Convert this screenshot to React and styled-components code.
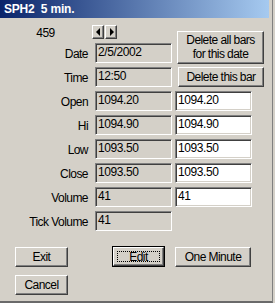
import React from "react";
import styled, { createGlobalStyle, css } from "styled-components";

const Global = createGlobalStyle`
  html, body { margin: 0; padding: 0; background: #d4d0c8; }
  body { font-family: "Liberation Sans", Arial, sans-serif; font-size: 12px; letter-spacing: -0.55px; color: #000; }
`;

const Window = styled.div`
  width: 273px;
  height: 303px;
  box-sizing: border-box;
  padding-right: 3px;
  background: #d4d0c8;
  border-right: 1px solid #808080;
  border-bottom: 2px solid #6a6a6a;
  overflow: hidden;
`;

const TitleBar = styled.div`
  height: 18px;
  display: flex;
  align-items: center;
  padding-left: 4px;
  background: linear-gradient(to right, #0a246a, #a6caf0);
  color: #fff;
  font-weight: bold;
  font-size: 12px;
  letter-spacing: -0.2px;
  white-space: pre;
`;

const Body = styled.div`
  display: grid;
  grid-template-columns: 88px 77px 87px;
  grid-template-rows: 16px repeat(8, 20px) 32px 24px;
  row-gap: 4px;
  padding-top: 5px;
`;

const Counter = styled.div`
  grid-column: 1;
  grid-row: 1;
  text-align: center;
  align-self: center;
  padding-left: 3px;
  padding-top: 3px;
  line-height: 14px;
`;

const Arrows = styled.div`
  grid-column: 2;
  grid-row: 1;
  display: flex;
  gap: 1px;
  padding-left: 4px;
  padding-top: 2px;
`;

const raised = css`
  box-sizing: border-box;
  background: #d4d0c8;
  border: 1px solid;
  border-color: #fff #404040 #404040 #fff;
  box-shadow: inset -1px -1px #808080;
  font-family: inherit;
  color: #000;
  padding: 0;
`;

const ArrowButton = styled.div`
  ${raised}
  width: 12px;
  height: 14px;
  display: flex;
  align-items: center;
  justify-content: center;
`;

const Label = styled.div`
  grid-column: 1;
  text-align: right;
  align-self: center;
  line-height: 14px;
  padding-top: 1px;
`;

const Field = styled.div`
  box-sizing: border-box;
  height: 20px;
  width: 77px;
  border: 1px solid;
  border-color: #808080 #fff #fff #808080;
  box-shadow: inset 1px 1px #404040, inset -1px -1px #d4d0c8;
  background: ${(p) => (p.$editable ? "#fff" : "#d4d0c8")};
  padding: 1px 2px 0;
  line-height: 15px;
  font-size: 12px;
  letter-spacing: -0.4px;
  white-space: nowrap;
  overflow: hidden;
  grid-column: ${(p) => (p.$editable ? 3 : 2)};
  margin-left: ${(p) => (p.$editable ? "10px" : "7px")};
`;

const Button = styled.div`
  ${raised}
  display: flex;
  align-items: center;
  justify-content: center;
  text-align: center;
  line-height: 14px;
  height: ${(p) => p.$h || 20}px;
`;

const DeleteAll = styled(Button)`
  grid-column: 3;
  grid-row: 1 / span 2;
  align-self: end;
  width: 87px;
  margin-left: 12px;
  margin-bottom: -1px;
  padding-bottom: 1px;
`;

const DeleteBar = styled(Button)`
  grid-column: 3;
  grid-row: 3;
  width: 86px;
  margin-left: 13px;
`;

const FooterButton = styled(Button)`
  grid-row: ${(p) => p.$row};
  grid-column: ${(p) => p.$col};
  align-self: end;
  width: ${(p) => p.$w}px;
  margin-left: ${(p) => p.$ml || 0}px;
`;

const DefaultButton = styled.div`
  grid-row: 10;
  grid-column: 2;
  align-self: end;
  justify-self: end;
  box-sizing: border-box;
  width: 53px;
  height: 21px;
  border: 1px solid #000;
  display: flex;
`;

const DefaultInner = styled(Button)`
  flex: 1;
  height: auto;
  position: relative;
`;

const Focus = styled.span`
  display: flex;
  align-items: center;
  justify-content: center;
  position: absolute;
  inset: 3px;
  border: 1px dotted #000;
`;

const Tri = ({ dir }) => (
  <svg width="5" height="8" viewBox="0 0 5 8">
    {dir === "left" ? (
      <polygon points="4,0 4,8 0,4" fill="#000" />
    ) : (
      <polygon points="1,0 1,8 5,4" fill="#000" />
    )}
  </svg>
);

const rows = [
  { label: "Date", value: "2/5/2002" },
  { label: "Time", value: "12:50" },
  { label: "Open", value: "1094.20", edit: "1094.20" },
  { label: "Hi", value: "1094.90", edit: "1094.90" },
  { label: "Low", value: "1093.50", edit: "1093.50" },
  { label: "Close", value: "1093.50", edit: "1093.50" },
  { label: "Volume", value: "41", edit: "41" },
  { label: "Tick Volume", value: "41" },
];

export default function App() {
  return (
    <>
      <Global />
      <Window>
        <TitleBar>{"SPH2  5 min."}</TitleBar>
        <Body>
          <Counter>459</Counter>
          <Arrows>
            <ArrowButton><Tri dir="left" /></ArrowButton>
            <ArrowButton><Tri dir="right" /></ArrowButton>
          </Arrows>
          <DeleteAll $h={33}>Delete all bars<br />for this date</DeleteAll>
          <DeleteBar>Delete this bar</DeleteBar>
          {rows.map((r, i) => (
            <React.Fragment key={r.label}>
              <Label style={{ gridRow: i + 2 }}>{r.label}</Label>
              <Field style={{ gridRow: i + 2 }}>{r.value}</Field>
              {r.edit && (
                <Field $editable style={{ gridRow: i + 2 }}>{r.edit}</Field>
              )}
            </React.Fragment>
          ))}
          <FooterButton $row={10} $col={1} $w={53} $ml={15}>Exit</FooterButton>
          <DefaultButton>
            <DefaultInner><Focus>Edit</Focus></DefaultInner>
          </DefaultButton>
          <FooterButton $row={10} $col={3} $w={76} $ml={10}>One Minute</FooterButton>
          <FooterButton $row={11} $col={1} $w={53} $ml={15}>Cancel</FooterButton>
        </Body>
      </Window>
    </>
  );
}
